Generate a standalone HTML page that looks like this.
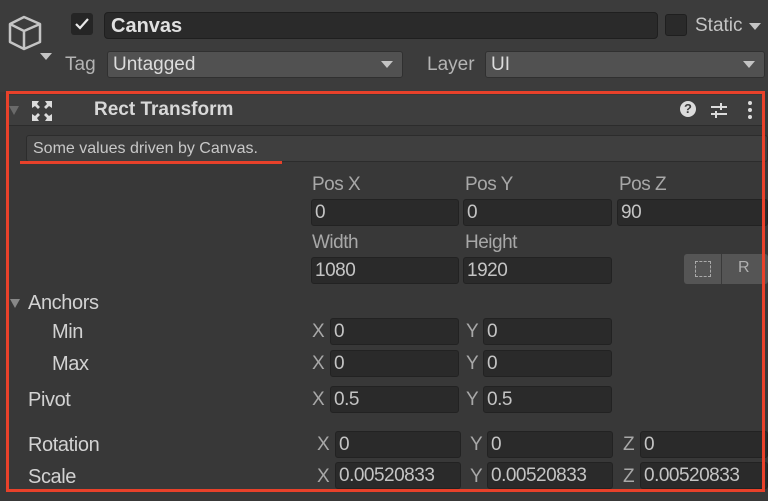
<!DOCTYPE html>
<html><head><style>
body{margin:0;width:768px;height:501px;background:#383838;font-family:"Liberation Sans",sans-serif;color:#c8c8c8;overflow:hidden;position:relative}
.a{position:absolute;white-space:nowrap}
.f{position:absolute;background:#2a2a2a;border:1px solid #222;border-radius:3px;box-sizing:border-box;height:27px;font-size:19px;line-height:25px;padding-left:3px;color:#c4c4c4;letter-spacing:-0.5px;overflow:hidden}
.l{position:absolute;font-size:19px;color:#a8a8a8;letter-spacing:-0.5px}
.lb{position:absolute;font-size:20px;color:#d2d2d2;letter-spacing:-0.4px}
.dd{position:absolute;background:#515151;border:1px solid #303030;border-radius:3px;box-sizing:border-box;height:27px;font-size:19px;line-height:25px;padding-left:5px;color:#dcdcdc}
.tri{position:absolute;width:0;height:0;border-left:7px solid transparent;border-right:7px solid transparent;border-top:8px solid #c4c4c4}
</style></head><body>
<div class="a" style="left:0;top:0;width:768px;height:92px;background:#3c3c3c"></div>
<svg class="a" style="left:6px;top:14px" width="46" height="46" viewBox="0 0 46 46"><g fill="none" stroke="#c4c4c4" stroke-width="2.5" stroke-linejoin="round"><path d="M4 10 L18 3 L34 10 L34 28 L18 35 L4 28 Z"/><path d="M4 10 L18 17 L34 10 M18 17 L18 35"/></g><path d="M34 39 L46 39 L40 46 Z" fill="#c4c4c4"/></svg>
<div class="a" style="left:71px;top:13px;width:22px;height:22px;background:#252525;border-radius:3px"></div>
<svg class="a" style="left:74px;top:16px" width="16" height="16"><path d="M2 8 L6 12 L14 3" stroke="#e8e8e8" stroke-width="2.2" fill="none"/></svg>
<div class="a" style="left:104px;top:12px;width:554px;height:27px;background:#2a2a2a;border:1px solid #1f1f1f;border-radius:4px;box-sizing:border-box;font-size:20px;line-height:26px;padding-left:6px;font-weight:bold;color:#e0e0e0">Canvas</div>
<div class="a" style="left:665px;top:14px;width:22px;height:22px;background:#2a2a2a;border:1px solid #1f1f1f;border-radius:3px;box-sizing:border-box"></div>
<div class="a" style="left:695px;top:15px;font-size:19px;color:#c4c4c4">Static</div>
<div class="tri" style="left:749px;top:23px;border-left-width:6px;border-right-width:6px;border-top-width:7px"></div>
<div class="a" style="left:65px;top:54px;font-size:19px;color:#b4b4b4">Tag</div>
<div class="dd" style="left:107px;top:51px;width:296px">Untagged</div>
<div class="tri" style="left:381px;top:61px;border-left-width:6px;border-right-width:6px;border-top-width:7px"></div>
<div class="a" style="left:427px;top:54px;font-size:19px;color:#b4b4b4">Layer</div>
<div class="dd" style="left:485px;top:51px;width:280px">UI</div>
<div class="tri" style="left:743px;top:61px;border-left-width:6px;border-right-width:6px;border-top-width:7px"></div>
<div class="a" style="left:7px;top:95px;width:757px;height:30px;background:#3e3e3e;border-bottom:1px solid #2c2c2c"></div>
<div class="tri" style="left:9px;top:106px;border-left-width:5px;border-right-width:5px;border-top-width:9px;border-top-color:#6a6a6a"></div>
<svg class="a" style="left:31px;top:100px" width="22" height="22" viewBox="0 0 22 22" fill="#dcdcdc"><path d="M1 1 L8 1 L6 4 L9 7 L7 9 L4 6 L1 8Z"/><path d="M21 1 L14 1 L16 4 L13 7 L15 9 L18 6 L21 8Z"/><path d="M1 21 L8 21 L6 18 L9 15 L7 13 L4 16 L1 14Z"/><path d="M21 21 L14 21 L16 18 L13 15 L15 13 L18 16 L21 14Z"/></svg>
<div class="a" style="left:94px;top:99px;font-size:19px;font-weight:bold;color:#d8d8d8">Rect Transform</div>
<div class="a" style="left:680px;top:101px;width:16px;height:16px;border-radius:50%;background:#dcdcdc;color:#3e3e3e;font-size:13px;font-weight:bold;text-align:center;line-height:16px">?</div>
<svg class="a" style="left:710px;top:101px" width="18" height="18"><g stroke="#dcdcdc" stroke-width="2"><path d="M1 6 H17 M1 13 H17"/><path d="M11 2 V9 M6 10 V17"/></g></svg>
<svg class="a" style="left:746px;top:100px" width="8" height="20" fill="#dcdcdc"><circle cx="4" cy="3" r="2"/><circle cx="4" cy="10" r="2"/><circle cx="4" cy="17" r="2"/></svg>
<div class="a" style="left:26px;top:135px;width:742px;height:27px;background:#3f3f3f;border:1px solid #2c2c2c;border-radius:3px;box-sizing:border-box;font-size:16px;line-height:25px;padding-left:6px;color:#c8c8c8">Some values driven by Canvas.</div>
<div class="a" style="left:20px;top:161px;width:262px;height:3px;background:#e8412a"></div>
<div class="l" style="left:312px;top:174px">Pos X</div>
<div class="l" style="left:465px;top:174px">Pos Y</div>
<div class="l" style="left:619px;top:174px">Pos Z</div>
<div class="f" style="left:311px;top:199px;width:148px">0</div>
<div class="f" style="left:463px;top:199px;width:149px">0</div>
<div class="f" style="left:617px;top:199px;width:151px">90</div>
<div class="l" style="left:312px;top:232px">Width</div>
<div class="l" style="left:465px;top:232px">Height</div>
<div class="f" style="left:311px;top:257px;width:148px">1080</div>
<div class="f" style="left:463px;top:257px;width:149px">1920</div>
<div class="a" style="left:684px;top:254px;width:84px;height:30px;background:#555;border-radius:3px"></div>
<div class="a" style="left:721px;top:254px;width:1px;height:30px;background:#3a3a3a"></div>
<div class="a" style="left:695px;top:261px;width:14px;height:14px;border:1px dashed #aaa"></div>
<div class="a" style="left:738px;top:259px;font-size:16px;color:#b0b0b0">R</div>
<div class="tri" style="left:10px;top:299px;border-left-width:5px;border-right-width:5px;border-top-width:9px;border-top-color:#888"></div>
<div class="lb" style="left:28px;top:292px">Anchors</div>
<div class="lb" style="left:52px;top:321px">Min</div>
<div class="lb" style="left:52px;top:353px">Max</div>
<div class="lb" style="left:28px;top:389px">Pivot</div>
<div class="lb" style="left:28px;top:434px">Rotation</div>
<div class="lb" style="left:28px;top:466px">Scale</div>
<div class="l" style="left:312px;top:321px">X</div><div class="f" style="left:330px;top:318px;width:129px">0</div>
<div class="l" style="left:466px;top:321px">Y</div><div class="f" style="left:483px;top:318px;width:129px">0</div>
<div class="l" style="left:312px;top:353px">X</div><div class="f" style="left:330px;top:350px;width:129px">0</div>
<div class="l" style="left:466px;top:353px">Y</div><div class="f" style="left:483px;top:350px;width:129px">0</div>
<div class="l" style="left:312px;top:389px">X</div><div class="f" style="left:330px;top:386px;width:129px">0.5</div>
<div class="l" style="left:466px;top:389px">Y</div><div class="f" style="left:483px;top:386px;width:129px">0.5</div>
<div class="l" style="left:317px;top:434px">X</div><div class="f" style="left:335px;top:431px;width:126px">0</div>
<div class="l" style="left:470px;top:434px">Y</div><div class="f" style="left:487px;top:431px;width:126px">0</div>
<div class="l" style="left:623px;top:434px">Z</div><div class="f" style="left:640px;top:431px;width:128px">0</div>
<div class="l" style="left:317px;top:466px">X</div><div class="f" style="left:335px;top:462px;width:126px">0.00520833</div>
<div class="l" style="left:470px;top:466px">Y</div><div class="f" style="left:487px;top:462px;width:126px">0.00520833</div>
<div class="l" style="left:623px;top:466px">Z</div><div class="f" style="left:640px;top:462px;width:128px">0.00520833</div>
<div class="a" style="left:6px;top:91px;width:759px;height:401px;border:3px solid #e8412a;box-sizing:border-box"></div>
</body></html>
